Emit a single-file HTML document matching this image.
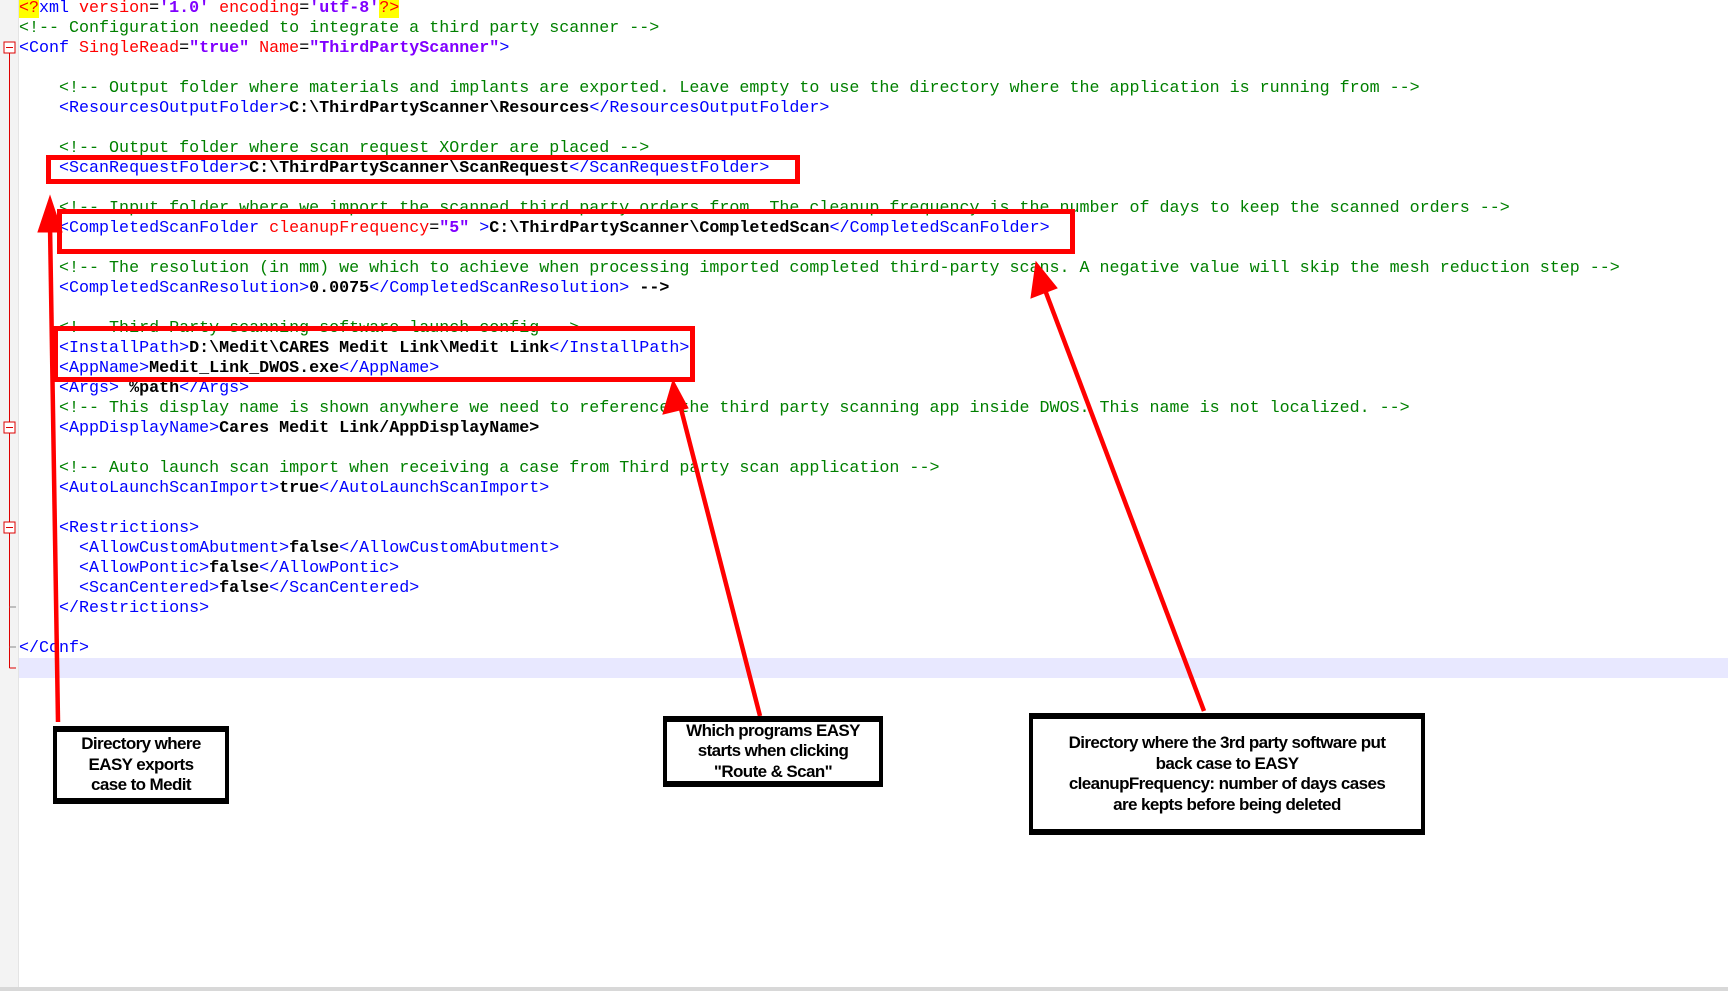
<!DOCTYPE html>
<html><head><meta charset="utf-8"><style>
html,body{margin:0;padding:0;background:#fff;width:1728px;height:991px;overflow:hidden;position:relative}
.gut{position:absolute;left:0;top:0;width:18px;height:988px;background:#f3f3f3;border-right:1px solid #e4e4e4}
.hl{position:absolute;left:19px;top:658px;width:1709px;height:20px;background:#e8e8ff}
.code{position:absolute;left:19px;top:-1px;margin:0;font-family:"Liberation Mono",monospace;font-size:16.68px;line-height:20px;white-space:pre;color:#000}
.t{color:#0000ff}.a{color:#ff0000}.v{color:#8000ff;font-weight:bold}.c{color:#008000}.b{font-weight:bold}
.y{background:#ffff00;color:#ff0000}
.box{position:absolute;border:5px solid #f00;box-sizing:border-box}
.note{position:absolute;border:4px solid #000;border-top-width:6px;border-bottom-width:6px;box-sizing:border-box;background:#fff;font-family:"Liberation Sans",sans-serif;font-weight:bold;font-size:17px;line-height:20.5px;text-align:center;letter-spacing:-0.6px;display:flex;align-items:center;justify-content:center}
.bot{position:absolute;left:0;top:987px;width:1728px;height:4px;background:#d8d8d8}
</style></head><body>
<div class="gut"></div>
<div class="hl"></div>
<svg style="position:absolute;left:0;top:0" width="18" height="991">
<rect x="4" y="42" width="11" height="11" fill="#fff" stroke="#d00"/><line x1="6" y1="47.5" x2="13" y2="47.5" stroke="#d00"/>
<line x1="9.5" y1="53" x2="9.5" y2="668" stroke="#d00"/><line x1="9.5" y1="668" x2="16" y2="668" stroke="#d00"/>
<rect x="4" y="422" width="11" height="11" fill="#fff" stroke="#d00"/><line x1="6" y1="427.5" x2="13" y2="427.5" stroke="#d00"/>
<rect x="4" y="522" width="11" height="11" fill="#fff" stroke="#d00"/><line x1="6" y1="527.5" x2="13" y2="527.5" stroke="#d00"/>
<line x1="9.5" y1="607" x2="16" y2="607" stroke="#888"/><line x1="9.5" y1="647" x2="16" y2="647" stroke="#888"/>
</svg>
<pre class="code"><span class="y">&lt;?</span><span class="t">xml</span> <span class="a">version</span>=<span class="v">'1.0'</span> <span class="a">encoding</span>=<span class="v">'utf-8'</span><span class="y">?&gt;</span>
<span class="c">&lt;!-- Configuration needed to integrate a third party scanner --&gt;</span>
<span class="t">&lt;Conf</span> <span class="a">SingleRead</span>=<span class="v">"true"</span> <span class="a">Name</span>=<span class="v">"ThirdPartyScanner"</span><span class="t">&gt;</span>

    <span class="c">&lt;!-- Output folder where materials and implants are exported. Leave empty to use the directory where the application is running from --&gt;</span>
    <span class="t">&lt;ResourcesOutputFolder&gt;</span><span class="b">C:\ThirdPartyScanner\Resources</span><span class="t">&lt;/ResourcesOutputFolder&gt;</span>

    <span class="c">&lt;!-- Output folder where scan request XOrder are placed --&gt;</span>
    <span class="t">&lt;ScanRequestFolder&gt;</span><span class="b">C:\ThirdPartyScanner\ScanRequest</span><span class="t">&lt;/ScanRequestFolder&gt;</span>

    <span class="c">&lt;!-- Input folder where we import the scanned third party orders from. The cleanup frequency is the number of days to keep the scanned orders --&gt;</span>
    <span class="t">&lt;CompletedScanFolder</span> <span class="a">cleanupFrequency</span>=<span class="v">"5"</span> <span class="t">&gt;</span><span class="b">C:\ThirdPartyScanner\CompletedScan</span><span class="t">&lt;/CompletedScanFolder&gt;</span>

    <span class="c">&lt;!-- The resolution (in mm) we which to achieve when processing imported completed third-party scans. A negative value will skip the mesh reduction step --&gt;</span>
    <span class="t">&lt;CompletedScanResolution&gt;</span><span class="b">0.0075</span><span class="t">&lt;/CompletedScanResolution&gt;</span> <span class="b">--&gt;</span>

    <span class="c">&lt;!-- Third Party scanning software launch config --&gt;</span>
    <span class="t">&lt;InstallPath&gt;</span><span class="b">D:\Medit\CARES Medit Link\Medit Link</span><span class="t">&lt;/InstallPath&gt;</span>
    <span class="t">&lt;AppName&gt;</span><span class="b">Medit_Link_DWOS.exe</span><span class="t">&lt;/AppName&gt;</span>
    <span class="t">&lt;Args&gt;</span> <span class="b">%path</span><span class="t">&lt;/Args&gt;</span>
    <span class="c">&lt;!-- This display name is shown anywhere we need to reference the third party scanning app inside DWOS. This name is not localized. --&gt;</span>
    <span class="t">&lt;AppDisplayName&gt;</span><span class="b">Cares Medit Link/AppDisplayName&gt;</span>

    <span class="c">&lt;!-- Auto launch scan import when receiving a case from Third party scan application --&gt;</span>
    <span class="t">&lt;AutoLaunchScanImport&gt;</span><span class="b">true</span><span class="t">&lt;/AutoLaunchScanImport&gt;</span>

    <span class="t">&lt;Restrictions&gt;</span>
      <span class="t">&lt;AllowCustomAbutment&gt;</span><span class="b">false</span><span class="t">&lt;/AllowCustomAbutment&gt;</span>
      <span class="t">&lt;AllowPontic&gt;</span><span class="b">false</span><span class="t">&lt;/AllowPontic&gt;</span>
      <span class="t">&lt;ScanCentered&gt;</span><span class="b">false</span><span class="t">&lt;/ScanCentered&gt;</span>
    <span class="t">&lt;/Restrictions&gt;</span>

<span class="t">&lt;/Conf&gt;</span></pre>
<div class="box" style="left:46px;top:155px;width:754px;height:29px"></div>
<div class="box" style="left:57px;top:209px;width:1018px;height:45px"></div>
<div class="box" style="left:53px;top:326px;width:642px;height:56px"></div>
<svg style="position:absolute;left:0;top:0" width="1728" height="991">
<g fill="#f00" stroke="#f00" stroke-width="4.5">
<line x1="58" y1="722" x2="50" y2="225"/>
<polygon points="50,196 38,232 62,232" stroke-width="1"/>
<line x1="760" y1="716" x2="680" y2="405"/>
<polygon points="673,380 663,414 688,408" stroke-width="1"/>
<line x1="1204" y1="711" x2="1045" y2="290"/>
<polygon points="1036,262 1031,298 1057,288" stroke-width="1"/>
</g></svg>
<div class="note" style="left:53px;top:726px;width:176px;height:78px">Directory where<br>EASY exports<br>case to Medit</div>
<div class="note" style="left:663px;top:716px;width:220px;height:71px">Which programs EASY<br>starts when clicking<br>"Route &amp; Scan"</div>
<div class="note" style="left:1029px;top:713px;width:396px;height:122px">Directory where the 3rd party software put<br>back case to EASY<br>cleanupFrequency: number of days cases<br>are kepts before being deleted</div>
<div class="bot"></div>
</body></html>
